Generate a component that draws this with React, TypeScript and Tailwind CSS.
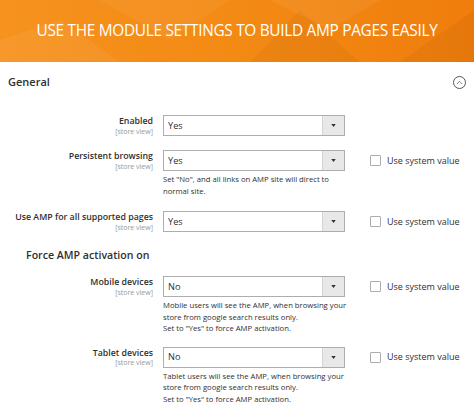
import { ChevronUp } from 'lucide-react';

type Row = {
  label: string;
  value: string;
  system?: boolean;
  notes?: string[];
};

const font = { fontFamily: '"Open Sans", "Noto Sans", sans-serif' };

function Select({ value }: { value: string }) {
  return (
    <div className="flex h-[21px] w-[182px] border border-[#adadad] bg-white">
      <div className="flex flex-1 items-center pl-[4px] text-[9.2px] text-[#303030]">{value}</div>
      <div className="flex w-[22px] items-center justify-center border-l border-[#d4d4d4] bg-[#e8e8e8]">
        <svg width="5" height="3" viewBox="0 0 6 4">
          <path d="M0 0h6L3 4z" fill="#333" />
        </svg>
      </div>
    </div>
  );
}

function FieldRow({ row, mt }: { row: Row; mt: string }) {
  return (
    <div className={`flex ${mt}`}>
      <div className="w-[154px] shrink-0 whitespace-nowrap pr-[1px] pt-[2px] text-right leading-none">
        <div className="text-[8.8px] font-semibold text-[#303030]">{row.label}</div>
        <div className="mt-[2px] text-[7px] text-[#999]">[store view]</div>
      </div>
      <div className="ml-[9px] w-[182px] shrink-0">
        <Select value={row.value} />
        {row.notes && (
          <div className="mt-[3px] whitespace-nowrap text-[7.7px] leading-[11.5px] text-[#303030]">
            {row.notes.map((n) => (
              <div key={n}>{n}</div>
            ))}
          </div>
        )}
      </div>
      {row.system && (
        <label className="ml-[25px] flex h-[21px] items-center gap-[6px] whitespace-nowrap text-[9px] text-[#303030]">
          <span className="block h-[11px] w-[11px] rounded-[1px] border border-[#adadad] bg-white" />
          Use system value
        </label>
      )}
    </div>
  );
}

export default function App() {
  return (
    <div className="h-[410px] w-[474px] overflow-hidden bg-white" style={font}>
      <div className="relative flex h-[62px] items-center justify-center overflow-hidden bg-gradient-to-r from-[#f6921e] via-[#f38a14] to-[#f07d0c]">
        <svg className="absolute inset-0" width="474" height="62" viewBox="0 0 474 62">
          <polygon points="0,40 60,20 120,62 0,62" fill="#ffffff" opacity="0.06" />
          <polygon points="100,0 230,0 170,40" fill="#ffffff" opacity="0.05" />
          <polygon points="250,62 300,10 360,62" fill="#000000" opacity="0.03" />
          <polygon points="270,0 380,0 330,30" fill="#ffffff" opacity="0.06" />
          <polygon points="400,62 474,10 474,62" fill="#000000" opacity="0.04" />
        </svg>
        <h1 className="relative whitespace-nowrap text-[15.4px] tracking-[-0.3px] text-white">
          USE THE MODULE SETTINGS TO BUILD AMP PAGES EASILY
        </h1>
      </div>

      <div className="flex h-[40px] items-center justify-between pl-[8px] pr-[8px]">
        <div className="text-[11px] font-semibold text-[#303030]">General</div>
        <div className="flex h-[13px] w-[13px] items-center justify-center rounded-full border border-[#555]">
          <ChevronUp size={9} strokeWidth={2} color="#555" />
        </div>
      </div>

      <FieldRow row={{ label: 'Enabled', value: 'Yes' }} mt="mt-[13px]" />
      <FieldRow
        row={{
          label: 'Persistent browsing',
          value: 'Yes',
          system: true,
          notes: ['Set "No", and all links on AMP site will direct to', 'normal site.'],
        }}
        mt="mt-[14px]"
      />
      <FieldRow row={{ label: 'Use AMP for all supported pages', value: 'Yes', system: true }} mt="mt-[14px]" />

      <div className="mt-[13px] pl-[26px] text-[10.6px] font-semibold leading-[20px] text-[#303030]">
        Force AMP activation on
      </div>

      <FieldRow
        row={{
          label: 'Mobile devices',
          value: 'No',
          system: true,
          notes: [
            'Mobile users will see the AMP, when browsing your',
            'store from google search results only.',
            'Set to "Yes" to force AMP activation.',
          ],
        }}
        mt="mt-[11px]"
      />
      <FieldRow
        row={{
          label: 'Tablet devices',
          value: 'No',
          system: true,
          notes: [
            'Tablet users will see the AMP, when browsing your',
            'store from google search results only.',
            'Set to "Yes" to force AMP activation.',
          ],
        }}
        mt="mt-[12px]"
      />
    </div>
  );
}
